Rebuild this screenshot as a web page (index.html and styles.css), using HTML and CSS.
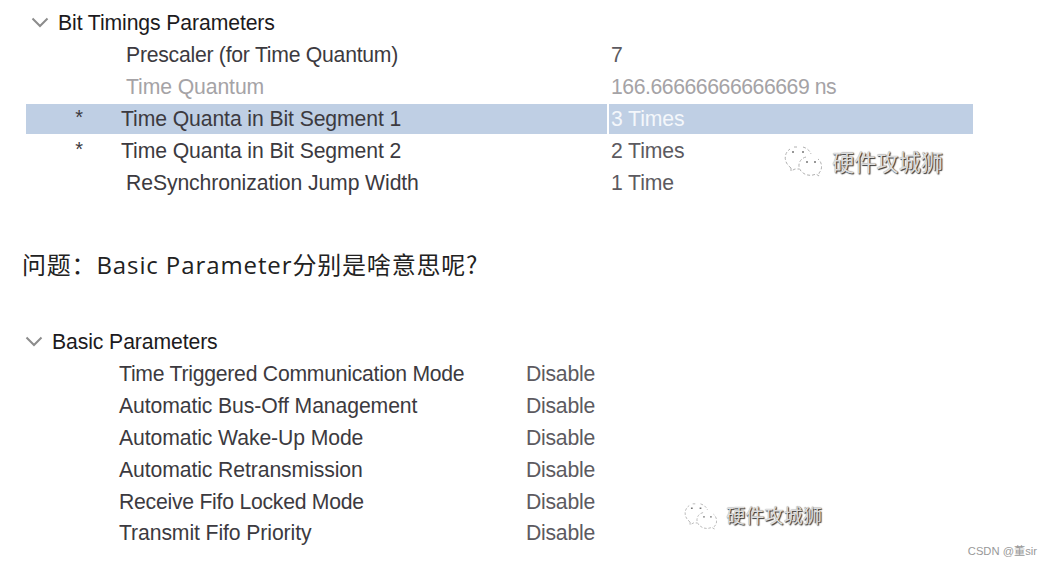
FILE: index.html
```
<!DOCTYPE html>
<html lang="zh">
<head>
    <meta charset="utf-8">
    <title>Bit Timings Parameters</title>
    <link rel="stylesheet" href="styles.css">
</head>
<body>
    <div class="panel timings">
        <div class="group">
            <svg class="arrow" viewBox="0 0 18 12"><path d="M1.5 1.5 L9 9 L16.5 1.5"/></svg>
            <span class="title">Bit Timings Parameters</span>
        </div>
        <div class="row"><span class="mark"></span><span class="name tight">Prescaler (for Time Quantum)</span><span class="value">7</span></div>
        <div class="row disabled"><span class="mark"></span><span class="name">Time Quantum</span><span class="value number">166.66666666666669 ns</span></div>
        <div class="row changed selected"><span class="mark">*</span><span class="name">Time Quanta in Bit Segment 1</span><span class="value">3 Times</span></div>
        <div class="row changed"><span class="mark">*</span><span class="name">Time Quanta in Bit Segment 2</span><span class="value">2 Times</span></div>
        <div class="row"><span class="mark"></span><span class="name">ReSynchronization Jump Width</span><span class="value">1 Time</span></div>
        <div class="watermark">
            <svg class="wechat" viewBox="0 0 38 32">
                <path d="M7 23 C-1 17 0 8 6 4 M10 2 L14 2 M19 2 C23 3 26 6 27 9 M7 23 L7 26 L11 24 L15 24"/>
                <path d="M22 12 C14 14 13 23 18 27 C22 31 28 31 32 29 L35 31 L35 28 C39 24 38 17 34 14"/>
                <path class="eyes" d="M8 7 h2 M18 7 h2 M22 17 h2 M30 17 h2"/>
            </svg>
            <span>硬件攻城狮</span>
        </div>
    </div>

    <p class="question">问题：<span class="latin">Basic Parameter</span>分别是啥意思呢?</p>

    <div class="panel basic">
        <div class="group">
            <svg class="arrow" viewBox="0 0 18 12"><path d="M1.5 1.5 L9 9 L16.5 1.5"/></svg>
            <span class="title">Basic Parameters</span>
        </div>
        <div class="row"><span class="name tight">Time Triggered Communication Mode</span><span class="value">Disable</span></div>
        <div class="row"><span class="name">Automatic Bus-Off Management</span><span class="value">Disable</span></div>
        <div class="row"><span class="name">Automatic Wake-Up Mode</span><span class="value">Disable</span></div>
        <div class="row"><span class="name">Automatic Retransmission</span><span class="value">Disable</span></div>
        <div class="row"><span class="name tight">Receive Fifo Locked Mode</span><span class="value">Disable</span></div>
        <div class="row"><span class="name">Transmit Fifo Priority</span><span class="value">Disable</span></div>
        <div class="watermark small">
            <svg class="wechat" viewBox="0 0 38 32">
                <path d="M7 23 C-1 17 0 8 6 4 M10 2 L14 2 M19 2 C23 3 26 6 27 9 M7 23 L7 26 L11 24 L15 24"/>
                <path d="M22 12 C14 14 13 23 18 27 C22 31 28 31 32 29 L35 31 L35 28 C39 24 38 17 34 14"/>
                <path class="eyes" d="M8 7 h2 M18 7 h2 M22 17 h2 M30 17 h2"/>
            </svg>
            <span>硬件攻城狮</span>
        </div>
    </div>

    <div class="credit">CSDN @董sir</div>
</body>
</html>
```
FILE: styles.css
```
body {
    margin: 0;
    height: 565px;
    overflow: hidden;
    position: relative;
    background-color: #fff;
    font-family: "Liberation Sans", Arial, sans-serif;
    font-size: 21.2px;
    letter-spacing: -0.1px;
    color: #3c3a40;
}
.panel {
    position: relative;
    white-space: nowrap;
}
.timings {
    width: 947px;
    margin-left: 26px;
    padding-top: 7px;
}
.group {
    display: flex;
    align-items: center;
    height: 32px;
    color: #1c1a20;
}
.arrow {
    width: 18px;
    height: 12px;
    margin-left: 5px;
    margin-right: 9px;
}
.arrow path {
    fill: none;
    stroke: #8c8c8c;
    stroke-width: 2;
}
.row {
    display: grid;
    align-items: center;
    height: 32px;
    line-height: 32px;
}
.timings .row {
    grid-template-columns: 48px 534px 1fr;
}
.timings .name {
    padding-left: 52px;
}
.timings .changed .name {
    padding-left: 47px;
}
.timings .value {
    padding-left: 3px;
}
.mark {
    width: 57px;
    height: 30px;
    line-height: 26px;
    font-size: 20px;
    text-align: right;
}
.tight {
    letter-spacing: -0.25px;
}
.value {
    color: #5c5a60;
}
.number {
    letter-spacing: -0.44px;
}
.disabled,
.disabled .value {
    color: #a5a3a6;
}
.timings .selected {
    height: 30px;
    margin: 1px 0;
    line-height: 30px;
    background: linear-gradient(#fff, #fff) 581px 0 / 2px 100% no-repeat #bfcfe4;
}
.selected .value {
    color: #f4f7fb;
}
.question {
    margin: 47px 0 0 22px;
    height: 36px;
    line-height: 36px;
    font-family: "Noto Sans CJK SC", sans-serif;
    font-size: 24px;
    letter-spacing: 0.8px;
    color: #222;
    white-space: nowrap;
}
.latin {
    font-family: "Open Sans", sans-serif;
    letter-spacing: 0.9px;
}
.basic {
    margin-left: 20px;
    margin-top: 44px;
}
.basic .row {
    height: 31.9px;
    line-height: 32px;
    grid-template-columns: 503px 1fr;
}
.basic .name {
    padding-left: 99px;
}
.basic .value {
    padding-left: 3px;
    letter-spacing: -0.25px;
}
.watermark {
    position: absolute;
    left: 758px;
    top: 145px;
    display: flex;
    align-items: center;
    gap: 10px;
    font-family: "Noto Sans CJK SC", sans-serif;
    font-size: 22.2px;
    line-height: 32px;
    letter-spacing: 0;
    color: #ddd;
    text-shadow: 1px 1px 1px #333, 0.5px 0 1px #777;
}
.wechat {
    width: 38px;
    height: 32px;
}
.wechat path {
    fill: none;
    stroke: #b0b0b0;
    stroke-width: 1;
    stroke-dasharray: 3 2;
}
.wechat .eyes {
    stroke: #777;
    stroke-width: 1.6;
    stroke-dasharray: none;
}
.small {
    left: 664px;
    top: 174px;
    font-size: 19.2px;
    gap: 9px;
}
.small .wechat {
    width: 33px;
    height: 28px;
}
.watermark span {
    margin-top: -1px;
}
.credit {
    position: absolute;
    right: 15px;
    bottom: 6px;
    font-family: "Liberation Sans", "Noto Sans CJK SC", sans-serif;
    font-size: 11.2px;
    line-height: 16px;
    letter-spacing: 0;
    color: #999;
}
```
